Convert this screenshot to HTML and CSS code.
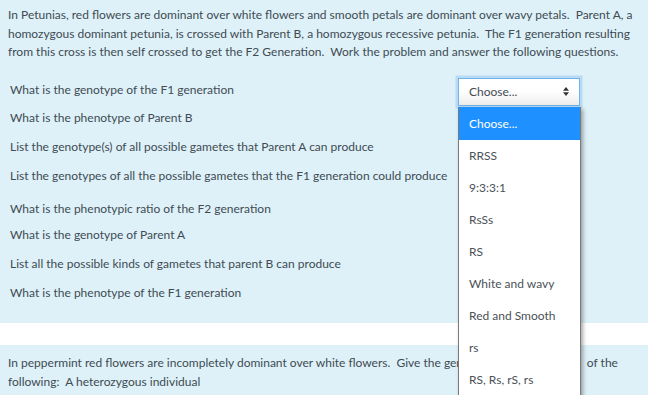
FILE: index.html
```html
<!DOCTYPE html>
<html>
<head>
<meta charset="utf-8">
<link rel="stylesheet" href="styles.css">
</head>
<body>
<div class="panel panel-top">
<p class="intro">In Petunias, red flowers are dominant over white flowers and smooth petals are dominant over wavy petals.  Parent A, a homozygous dominant petunia, is crossed with Parent B, a homozygous recessive petunia.  The F1 generation resulting from this cross is then self crossed to get the F2 Generation.  Work the problem and answer the following questions.</p>
<div class="questions">
<div class="row r1">
<span class="label">What is the genotype of the F1 generation</span>
<div class="select">
<span class="select-text">Choose...</span>
<svg class="arrows" width="6" height="9" viewBox="0 0 6 9"><path d="M0 3.8 L3 0 L6 3.8 Z M0 5.2 L6 5.2 L3 9 Z" fill="#333"/></svg>
<div class="dropdown">
<div class="opt active">Choose...</div>
<div class="opt">RRSS</div>
<div class="opt">9:3:3:1</div>
<div class="opt">RsSs</div>
<div class="opt">RS</div>
<div class="opt">White and wavy</div>
<div class="opt">Red and Smooth</div>
<div class="opt">rs</div>
<div class="opt">RS, Rs, rS, rs</div>
</div>
</div>
</div>
<div class="row r2"><span class="label">What is the phenotype of Parent B</span></div>
<div class="row r3"><span class="label">List the genotype(s) of all possible gametes that Parent A can produce</span></div>
<div class="row r4"><span class="label">List the genotypes of all the possible gametes that the F1 generation could produce</span></div>
<div class="row r5"><span class="label">What is the phenotypic ratio of the F2 generation</span></div>
<div class="row r6"><span class="label">What is the genotype of Parent A</span></div>
<div class="row r7"><span class="label">List all the possible kinds of gametes that parent B can produce</span></div>
<div class="row r8"><span class="label">What is the phenotype of the F1 generation</span></div>
</div>
</div>
<div class="gap"></div>
<div class="panel panel-bottom">
<p class="intro2">In peppermint red flowers are incompletely dominant over white flowers.  Give the genotypes and phenotype  of the following:  A heterozygous individual</p>
</div>
</body>
</html>
```
FILE: styles.css
```css
html, body {
  margin: 0;
  padding: 0;
  background: #ffffff;
}
body {
  font-family: "Lato", "Segoe UI", sans-serif;
  font-size: 12px;
  color: #404b53;
  overflow: hidden;
  height: 395px;
}
.panel {
  background: #def1f8;
}
.panel-top {
  height: 323px;
  box-sizing: border-box;
  padding: 6px 4px 0 8px;
}
.intro {
  margin: 0;
  line-height: 18.5px;
  white-space: pre-wrap;
}
.questions {
  display: flex;
  flex-direction: column;
  padding-left: 2px;
}
.row {
  display: flex;
  align-items: center;
  height: 18px;
  line-height: 18px;
}
.label {
  flex: 0 0 448px;
  white-space: nowrap;
}
.r1 { margin-top: 19px; }
.r2 { margin-top: 10px; }
.r3 { margin-top: 11px; }
.r4 { margin-top: 11px; }
.r5 { margin-top: 15px; }
.r6 { margin-top: 8px; }
.r7 { margin-top: 11px; }
.r8 { margin-top: 11px; }
.select {
  position: relative;
  box-sizing: border-box;
  width: 122px;
  height: 28px;
  margin: -3px 0 -7px 0;
  border: 1px solid #6fb3ea;
  box-shadow: 0 0 0 2.5px #b9daf3;
  background: linear-gradient(#ffffff 45%, #ededed);
  display: flex;
  align-items: center;
  justify-content: space-between;
  padding: 0 10px 0 10px;
  color: #444b52;
}
.select-text {
  line-height: 18px;
}
.arrows {
  display: block;
  margin-right: 0;
}
.dropdown {
  position: absolute;
  left: -1px;
  top: 28px;
  width: 123px;
  box-sizing: border-box;
  background: #ffffff;
  border: 1px solid #7a7a7a;
  border-top: none;
  box-shadow: 2px 2px 4px rgba(0, 0, 0, 0.35);
  z-index: 10;
}
.opt {
  height: 32px;
  line-height: 32px;
  padding-left: 10px;
  color: #4a5157;
  white-space: nowrap;
}
.opt.active {
  height: 33px;
  line-height: 33px;
  background: #1e90ff;
  color: #ffffff;
}
.gap {
  height: 22px;
}
.panel-bottom {
  height: 50px;
  padding: 8px 4px 0 8px;
}
.intro2 {
  margin: 0;
  line-height: 19px;
  white-space: pre-wrap;
}
```
